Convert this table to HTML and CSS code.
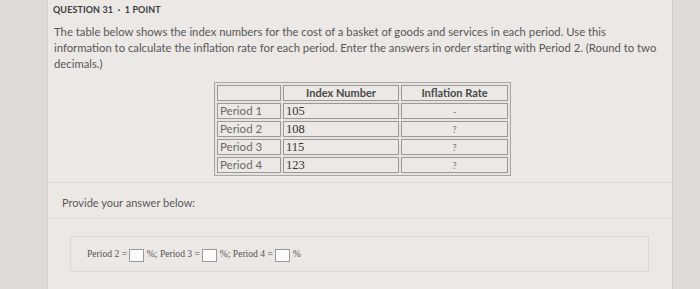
FILE: index.html
```html
<!DOCTYPE html>
<html lang="en">
<head>
  <meta charset="UTF-8">
  <title>Question 31</title>
  <link rel="stylesheet" href="styles.css">
</head>
<body>
  <div class="page">
    <div class="question-head">Question 31 &nbsp;·&nbsp; 1 point</div>

    <p class="prompt">The table below shows the index numbers for the cost of a basket of goods and services in each period. Use this information to calculate the inflation rate for each period. Enter the answers in order starting with Period 2. (Round to two decimals.)</p>

    <table class="index-table">
      <tr>
        <th class="col-label"></th>
        <th class="col-index">Index Number</th>
        <th class="col-rate">Inflation Rate</th>
      </tr>
      <tr>
        <td class="label">Period 1</td>
        <td class="num">105</td>
        <td class="rate">-</td>
      </tr>
      <tr>
        <td class="label">Period 2</td>
        <td class="num">108</td>
        <td class="rate">?</td>
      </tr>
      <tr>
        <td class="label">Period 3</td>
        <td class="num">115</td>
        <td class="rate">?</td>
      </tr>
      <tr>
        <td class="label">Period 4</td>
        <td class="num">123</td>
        <td class="rate">?</td>
      </tr>
    </table>

    <div class="answer-title">Provide your answer below:</div>

    <div class="answer-area">
      <div class="answer-box">
        Period 2 = <input type="text" class="blank"> %; Period 3 = <input type="text" class="blank"> %; Period 4 = <input type="text" class="blank"> %
      </div>
    </div>
  </div>
</body>
</html>
```

FILE: styles.css
```css
* {
  margin: 0;
  padding: 0;
  box-sizing: border-box;
}

body {
  width: 700px;
  height: 289px;
  overflow: hidden;
  background: #dedbd9;
  font-family: 'Lato', 'Open Sans', sans-serif;
}

.page {
  margin-left: 47px;
  width: 626px;
  height: 289px;
  background: #ebe8e6;
  border-left: 1px solid #d4d1cf;
  border-right: 1px solid #cfccca;
}

.question-head {
  padding: 4px 0 0 5px;
  font-size: 9px;
  font-weight: 700;
  text-transform: uppercase;
  color: #3d3d3d;
  letter-spacing: 0.1px;
}

.prompt {
  margin: 9px 0 0 6px;
  width: 606px;
  font-size: 11.3px;
  line-height: 16px;
  color: #575757;
}

/* old-school bordered table */
.index-table {
  margin: 10px 0 0 166px;
  border: 1px solid #a9a7a5;
  border-spacing: 2px;
  background: #e6e3e1;
}

.index-table th,
.index-table td {
  border: 1px solid #9c9a98;
  height: 16px;
  padding: 0 2px;
  background: #ebe8e6;
  line-height: 14px;
}

.index-table th {
  font-size: 11px;
  font-weight: 700;
  color: #4a4a4a;
  text-align: center;
}

.col-label { width: 64px; }
.col-index { width: 116px; }
.col-rate { width: 107px; }

.label {
  font-size: 11.5px;
  color: #6a6a6a;
}

.num {
  font-family: 'Liberation Serif', serif;
  font-size: 12.5px;
  color: #333;
}

.rate {
  text-align: center;
  font-size: 10px;
  color: #777;
}

.answer-title {
  margin-top: 6px;
  border-top: 1px solid #dcd9d7;
  border-bottom: 1px solid #dcd9d7;
  padding: 13px 0 0 14px;
  height: 37px;
  font-size: 11px;
  color: #595959;
}

.answer-area {
  padding: 17px 0 0 22px;
}

.answer-box {
  width: 579px;
  height: 36px;
  border: 1px solid #dbd8d6;
  padding: 11px 0 0 16px;
  font-family: 'Liberation Serif', serif;
  font-size: 9.6px;
  color: #555;
}

.blank {
  width: 15px;
  height: 13px;
  vertical-align: -3px;
  border: 1px solid #9a9a9a;
  background: #fbfbfb;
}
```
